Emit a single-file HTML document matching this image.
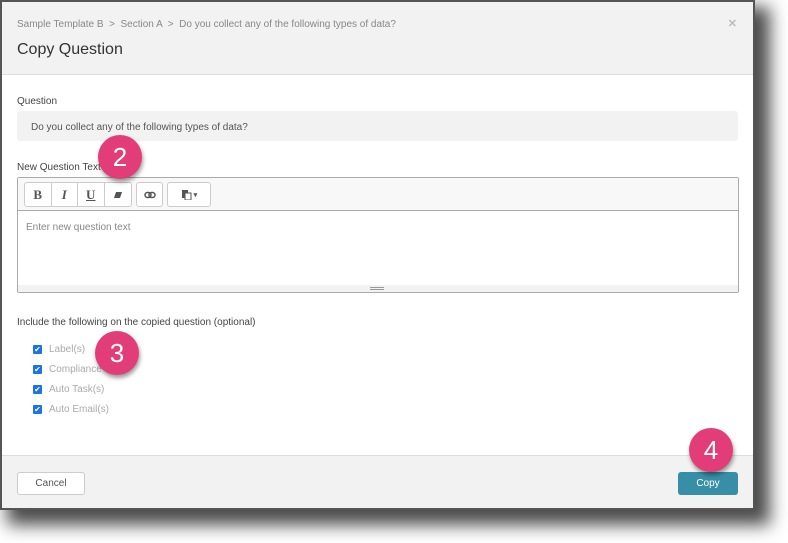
<!DOCTYPE html>
<html><head><meta charset="utf-8"><style>
*{box-sizing:border-box;margin:0;padding:0}
body{width:788px;height:543px;background:#fff;font-family:"Liberation Sans",sans-serif;position:relative;overflow:hidden}
.dlg{position:absolute;left:0;top:0;width:755px;height:510px;background:#fff;border:2px solid #555;box-shadow:11px 11px 16px 4px rgba(0,0,0,.7)}
.hdr{position:absolute;left:0;top:0;right:0;height:73px;background:#f2f2f2;border-bottom:1px solid #ddd}
.crumb{position:absolute;left:15px;top:17px;font-size:10px;color:#888}
.title{position:absolute;left:15px;top:39px;font-size:16px;color:#333}
.x{position:absolute;right:16px;top:15px;font-size:11px;color:#bbb;font-weight:bold}
.lbl{position:absolute;font-size:10px;color:#444}
.q{position:absolute;left:15px;top:109px;width:721px;height:30px;background:#f2f2f2;border-radius:3px;font-size:10px;color:#555;padding:11px 0 0 14px}
.ed{position:absolute;left:15px;top:175px;width:722px;height:116px;border:1px solid #aaa;border-radius:2px}
.tb{height:33px;background:#f8f8f8;border-bottom:1px solid #aaa;position:relative}
.g{position:absolute;top:4px;height:25px;border:1px solid #ccc;border-radius:3px;background:#fff;display:flex}
.g span{width:27px;height:23px;border-right:1px solid #ccc;display:flex;align-items:center;justify-content:center;font-family:"Liberation Serif",serif;font-weight:bold;font-size:13px;color:#555}
.g span:last-child{border-right:none}
.ph{position:absolute;left:8px;top:44px;font-size:10px;color:#888}
.rs{position:absolute;left:0;right:0;bottom:0;height:7px;background:#f2f2f2}
.cb{position:absolute;left:31px;font-size:10px;color:#aaa;display:flex;align-items:center}
.cb i{width:9px;height:9px;background:#1a73e8;border-radius:1px;margin-right:7px;display:inline-flex;align-items:center;justify-content:center;color:#fff;font-size:8px;font-style:normal}
.ft{position:absolute;left:0;right:0;top:453px;bottom:0;background:#f2f2f2;border-top:1px solid #ddd}
.btn{position:absolute;height:23px;border-radius:3px;font-size:10px;display:flex;align-items:center;justify-content:center}
.badge{position:absolute;width:44px;height:44px;border-radius:50%;background:#e23d79;color:#fff;font-size:26px;display:flex;align-items:center;justify-content:center;box-shadow:1px 3px 4px rgba(0,0,0,.4)}
</style></head><body>
<div class="dlg">
<div class="hdr">
<div class="crumb">Sample Template B &nbsp;&gt;&nbsp; Section A &nbsp;&gt;&nbsp; Do you collect any of the following types of data?</div>
<div class="title">Copy Question</div>
<div class="x">✕</div>
</div>
<div class="lbl" style="left:15px;top:94px">Question</div>
<div class="q">Do you collect any of the following types of data?</div>
<div class="lbl" style="left:15px;top:160px">New Question Text</div>
<div class="ed">
<div class="tb">
<div class="g" style="left:6px;width:108px"><span>B</span><span style="font-style:italic">I</span><span style="text-decoration:underline">U</span><span><svg width="10" height="8"><path d="M3 1h6l-2 6H1z" fill="#555"/></svg></span></div>
<div class="g" style="left:118px;width:27px"><span><svg width="12" height="8"><rect x="1" y="1.5" width="6" height="5" rx="2.5" fill="none" stroke="#555" stroke-width="1.5"/><rect x="5" y="1.5" width="6" height="5" rx="2.5" fill="none" stroke="#555" stroke-width="1.5"/></svg></span></div>
<div class="g" style="left:149px;width:44px"><span style="width:42px;font-size:7px"><svg width="11" height="11"><rect x="1" y="1" width="6" height="8" fill="#555"/><rect x="4" y="4" width="6" height="7" fill="#fff" stroke="#555"/></svg>&nbsp;▾</span></div>
</div>
<div class="ph">Enter new question text</div>
<div class="rs"><div style="position:absolute;left:352px;top:2px;width:14px;height:3px;border-top:1px solid #999;border-bottom:1px solid #999"></div></div>
</div>
<div class="lbl" style="left:15px;top:315px">Include the following on the copied question (optional)</div>
<div class="cb" style="top:342px"><i>✔</i>Label(s)</div>
<div class="cb" style="top:362px"><i>✔</i>Compliance</div>
<div class="cb" style="top:382px"><i>✔</i>Auto Task(s)</div>
<div class="cb" style="top:402px"><i>✔</i>Auto Email(s)</div>
<div class="ft">
<div class="btn" style="left:15px;top:16px;width:68px;background:#fff;border:1px solid #ccc;color:#555">Cancel</div>
<div class="btn" style="left:676px;top:16px;width:60px;background:#378fa7;color:#fff">Copy</div>
</div>
</div>
<div class="badge" style="left:98px;top:135px">2</div>
<div class="badge" style="left:95px;top:331px">3</div>
<div class="badge" style="left:689px;top:428px">4</div>
</body></html>
